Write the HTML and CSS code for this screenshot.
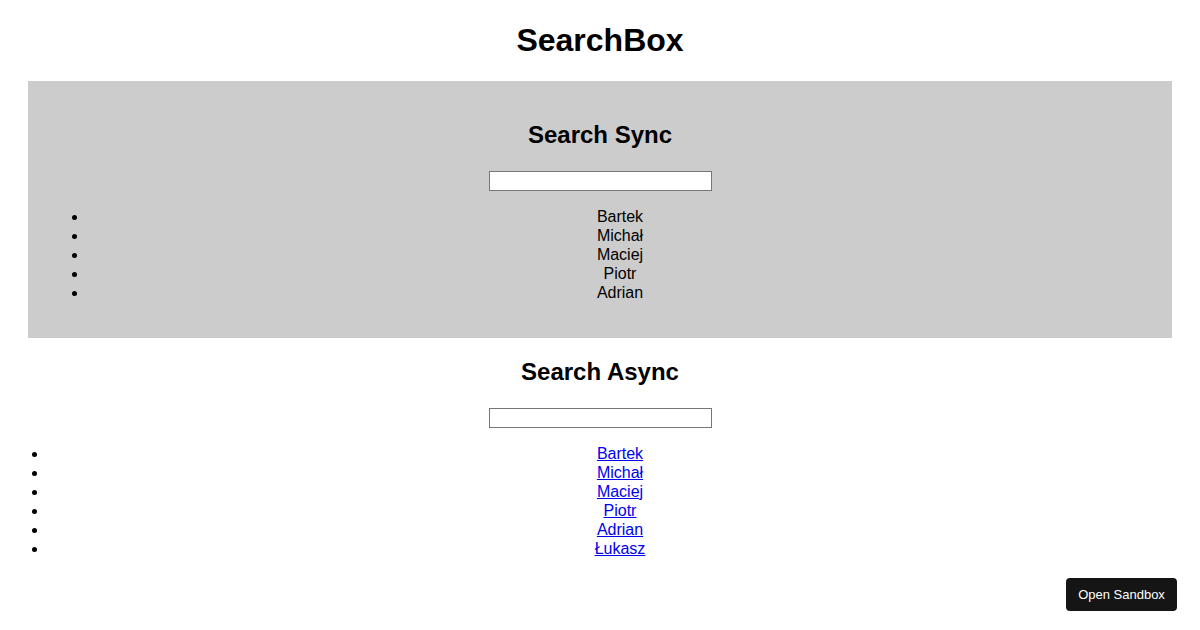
FILE: index.html
```html
<!DOCTYPE html>
<html>
<head>
<meta charset="utf-8">
<link rel="stylesheet" href="styles.css">
</head>
<body>
<h1 class="title">SearchBox</h1>
<section class="sync">
  <h2 class="heading">Search Sync</h2>
  <div class="field"><input class="search" type="text"></div>
  <ul class="list">
    <li>Bartek</li>
    <li>Michał</li>
    <li>Maciej</li>
    <li>Piotr</li>
    <li>Adrian</li>
  </ul>
</section>
<section class="async">
  <h2 class="heading">Search Async</h2>
  <div class="field"><input class="search" type="text"></div>
  <ul class="list">
    <li><a href="#">Bartek</a></li>
    <li><a href="#">Michał</a></li>
    <li><a href="#">Maciej</a></li>
    <li><a href="#">Piotr</a></li>
    <li><a href="#">Adrian</a></li>
    <li><a href="#">Łukasz</a></li>
  </ul>
</section>
<a class="sandbox" href="#">Open Sandbox</a>
</body>
</html>
```
FILE: styles.css
```css
body {
  margin: 0 8px 8px;
  font-family: "Liberation Sans", Arial, sans-serif;
  font-size: 16px;
  text-align: center;
  color: #000;
  background: #fff;
}
.title {
  font-size: 32px;
  margin: 22px 0 22px;
  line-height: 37px;
}
.sync {
  background: #cccccc;
  margin: 0 20px;
  padding: 20px;
}
.heading {
  font-size: 24px;
  line-height: 28px;
  margin: 20px 0;
}
.field {
  height: 22px;
  display: flex;
  justify-content: center;
  align-items: flex-end;
}
.search {
  width: 223px;
  height: 20px;
  box-sizing: border-box;
  border: 1px solid #767676;
  padding: 0 2px;
  background: #fff;
  margin: 0;
}
.list {
  margin: 16px 0;
  padding-left: 40px;
  line-height: 19px;
}
.list a {
  color: #0000ee;
  text-decoration: underline;
}
.sandbox {
  position: fixed;
  right: 23px;
  bottom: 19px;
  width: 111px;
  height: 33px;
  box-sizing: border-box;
  background: #151515;
  color: #fff;
  border-radius: 4px;
  font-size: 13px;
  line-height: 33px;
  text-align: center;
  text-decoration: none;
}
```
